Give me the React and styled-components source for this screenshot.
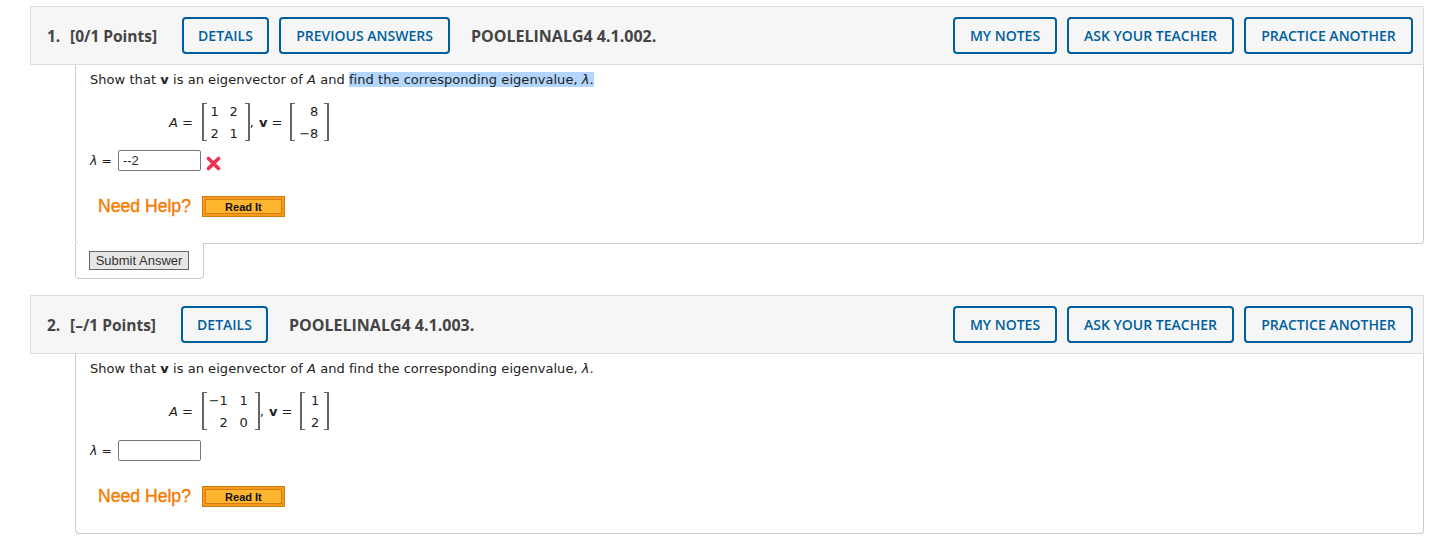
import React from 'react';
import styled, { createGlobalStyle } from 'styled-components';

const Global = createGlobalStyle`
html, body { margin: 0; padding: 0; background: #fff; }
body { font-family: "DejaVu Sans", sans-serif; color: #222; }
`;

const Page = styled.div`
  padding: 6px 7px 0 30px;
`;

const Question = styled.section`
  margin-bottom: ${(p) => (p.$last ? 0 : '16px')};
`;

const Header = styled.header`
  height: 57px;
  display: flex;
  align-items: center;
  gap: 10px;
  padding: 0 10px 0 16px;
  background: #f6f6f6;
  border: 1px solid #dcdcdc;
  font-family: "Open Sans", sans-serif;
  font-weight: 600;
  color: #444;
`;

const Number = styled.span`
  width: 13px;
  font-size: 15.5px;
  font-weight: 700;
  white-space: nowrap;
`;

const Points = styled.span`
  width: 89px;
  font-size: 15.5px;
  font-weight: 700;
  margin-right: ${(p) => p.$gap}px;
  white-space: nowrap;
`;

const HeadButton = styled.button`
  flex: none;
  height: 37px;
  width: ${(p) => p.$w}px;
  padding: 0;
  box-sizing: border-box;
  background: transparent;
  border: 2px solid #005f9e;
  border-radius: 4px;
  color: #005f9e;
  font-family: "Open Sans", sans-serif;
  font-weight: 600;
  font-size: 14px;
  white-space: nowrap;
`;

const Code = styled.span`
  font-size: 16px;
  font-weight: 700;
  margin-left: 11px;
  white-space: nowrap;
`;

const Spacer = styled.div`
  flex: 1;
`;

const Body = styled.div`
  margin-left: 45px;
  height: ${(p) => p.$h}px;
  box-sizing: border-box;
  padding: 6px 14px 0;
  background: #fff;
  border: 1px solid #ccc;
  border-top: 0;
  border-radius: 0 0 4px 4px;
  font-size: 13px;
`;

const Prompt = styled.p`
  margin: 0;
  height: 18px;
  line-height: 18px;
  letter-spacing: 0.05px;
  white-space: nowrap;
`;

const Selected = styled.span`
  background: #b2d6fd;
`;

const Formula = styled.div`
  display: flex;
  align-items: center;
  height: 38px;
  margin: 14px 0 0 79px;
  font-size: 13px;
  white-space: nowrap;
`;

const Eq = styled.span`
  margin: 0 ${(p) => p.$r}px 0 4px;
`;

const Comma = styled.span`
  margin-right: 5px;
`;

const Matrix = styled.div`
  display: grid;
  grid-template-columns: repeat(${(p) => p.$cols}, ${(p) => p.$cw}px);
  grid-auto-rows: 22px;
  align-items: center;
  align-content: center;
  justify-items: end;
  justify-content: end;
  width: ${(p) => p.$w}px;
  height: 38px;
  box-sizing: border-box;
  padding-right: ${(p) => p.$pad}px;
  border-left: 2px solid #666;
  border-right: 2px solid #666;
  position: relative;
  font-size: 13px;
  &::before, &::after {
    content: "";
    position: absolute;
    top: 0;
    bottom: 0;
    width: 3px;
    border-top: 1px solid #666;
    border-bottom: 1px solid #666;
  }
  &::before { left: 0; }
  &::after { right: 0; }
`;

const AnswerRow = styled.div`
  display: flex;
  align-items: center;
  height: 21px;
  margin-top: ${(p) => p.$top}px;
  font-size: 12.5px;
`;

const Answer = styled.div`
  width: 83px;
  height: 21px;
  box-sizing: border-box;
  margin-left: 6px;
  padding-left: 4px;
  line-height: 19px;
  border: 1px solid #767676;
  border-radius: 2px;
  background: #fff;
  color: #333;
  font-family: "Liberation Sans", sans-serif;
  font-size: 13px;
`;

const Cross = styled.svg`
  width: 15px;
  height: 15px;
  margin: 5px 0 0 5px;
`;

const HelpRow = styled.div`
  display: flex;
  align-items: center;
  height: 21px;
  margin: 25px 0 0 8px;
`;

const HelpText = styled.span`
  font-family: "Liberation Sans", sans-serif;
  font-size: 17.6px;
  -webkit-text-stroke: 0.4px #f57c00;
  color: #f57c00;
  white-space: nowrap;
  margin-right: 11px;
`;

const ReadIt = styled.button`
  width: 83px;
  height: 21px;
  padding: 0;
  box-sizing: border-box;
  background: #ffb52e;
  border: 3px solid #f8981d;
  outline: 1px solid #d07c10;
  outline-offset: -1px;
  box-shadow: inset 0 0 0 1px #d07c10;
  color: #111;
  font-family: "Liberation Sans", sans-serif;
  font-weight: 700;
  font-size: 11px;
`;

const SubmitTab = styled.div`
  position: relative;
  width: 129px;
  height: 36px;
  box-sizing: border-box;
  margin: -1px 0 0 45px;
  padding: 7px 0 0 13px;
  background: #fff;
  border: 1px solid #ccc;
  border-top: 0;
  border-radius: 0 0 4px 4px;
`;

const Submit = styled.button`
  width: 100px;
  height: 19px;
  padding: 0;
  box-sizing: border-box;
  background: #e6e6e6;
  border: 1px solid #666;
  color: #333;
  font-family: "Liberation Sans", sans-serif;
  font-size: 13px;
`;

const CrossIcon = () => (
  <Cross viewBox="0 0 15 15">
    <path d="M2.5 2.5 L12.5 12.5 M12.5 2.5 L2.5 12.5" stroke="#f5304f" strokeWidth="3.6" strokeLinecap="round" />
  </Cross>
);

const Cells = ({ values }) => values.map((v, i) => <span key={i}>{v}</span>);

const Problem = ({ num, points, gap, buttons, code, a, aW, aCw, v, vW, vPad, answer, answerTop, wrong, submit, bodyH, last }) => (
  <Question $last={last}>
    <Header>
      <Number>{num}</Number>
      <Points $gap={gap}>{points}</Points>
      {buttons.map(([label, w]) => (
        <HeadButton key={label} $w={w}>{label}</HeadButton>
      ))}
      <Code>{code}</Code>
      <Spacer />
      <HeadButton $w={104}>MY NOTES</HeadButton>
      <HeadButton $w={167}>ASK YOUR TEACHER</HeadButton>
      <HeadButton $w={169}>PRACTICE ANOTHER</HeadButton>
    </Header>
    <Body $h={bodyH}>
      <Prompt>
        Show that <b>v</b> is an eigenvector of <i>A</i> and{' '}
        {wrong ? (
          <Selected>find the corresponding eigenvalue, <i>λ</i>.</Selected>
        ) : (
          <>find the corresponding eigenvalue, <i>λ</i>.</>
        )}
      </Prompt>
      <Formula>
        <i>A</i>
        <Eq $r={9}>=</Eq>
        <Matrix $cols={2} $cw={aCw} $w={aW} $pad={10}>
          <Cells values={a} />
        </Matrix>
        <Comma>,</Comma>
        <b>v</b>
        <Eq $r={8}>=</Eq>
        <Matrix $cols={1} $cw={22} $w={vW} $pad={vPad}>
          <Cells values={v} />
        </Matrix>
      </Formula>
      <AnswerRow $top={answerTop}>
        <i>λ</i>&nbsp;=
        <Answer>{answer}</Answer>
        {wrong && <CrossIcon />}
      </AnswerRow>
      <HelpRow>
        <HelpText>Need Help?</HelpText>
        <ReadIt>Read It</ReadIt>
      </HelpRow>
    </Body>
    {submit && (
      <SubmitTab>
        <Submit>Submit Answer</Submit>
      </SubmitTab>
    )}
  </Question>
);

export default function App() {
  return (
    <Page>
      <Global />
      <Problem
        num="1."
        points="[0/1 Points]"
        gap={13}
        buttons={[['DETAILS', 87], ['PREVIOUS ANSWERS', 171]]}
        code="POOLELINALG4 4.1.002."
        a={['1', '2', '2', '1']}
        aW={48}
        aCw={19}
        v={['8', '−8']}
        vW={39}
        vPad={9}
        answer="--2"
        answerTop={9}
        wrong
        submit
        bodyH={179}
      />
      <Problem
        num="2."
        points="[–/1 Points]"
        gap={12}
        buttons={[['DETAILS', 87]]}
        code="POOLELINALG4 4.1.003."
        a={['−1', '1', '2', '0']}
        aW={58}
        aCw={20}
        v={['1', '2']}
        vW={29}
        vPad={8}
        answer=""
        answerTop={10}
        bodyH={180}
        last
      />
    </Page>
  );
}
